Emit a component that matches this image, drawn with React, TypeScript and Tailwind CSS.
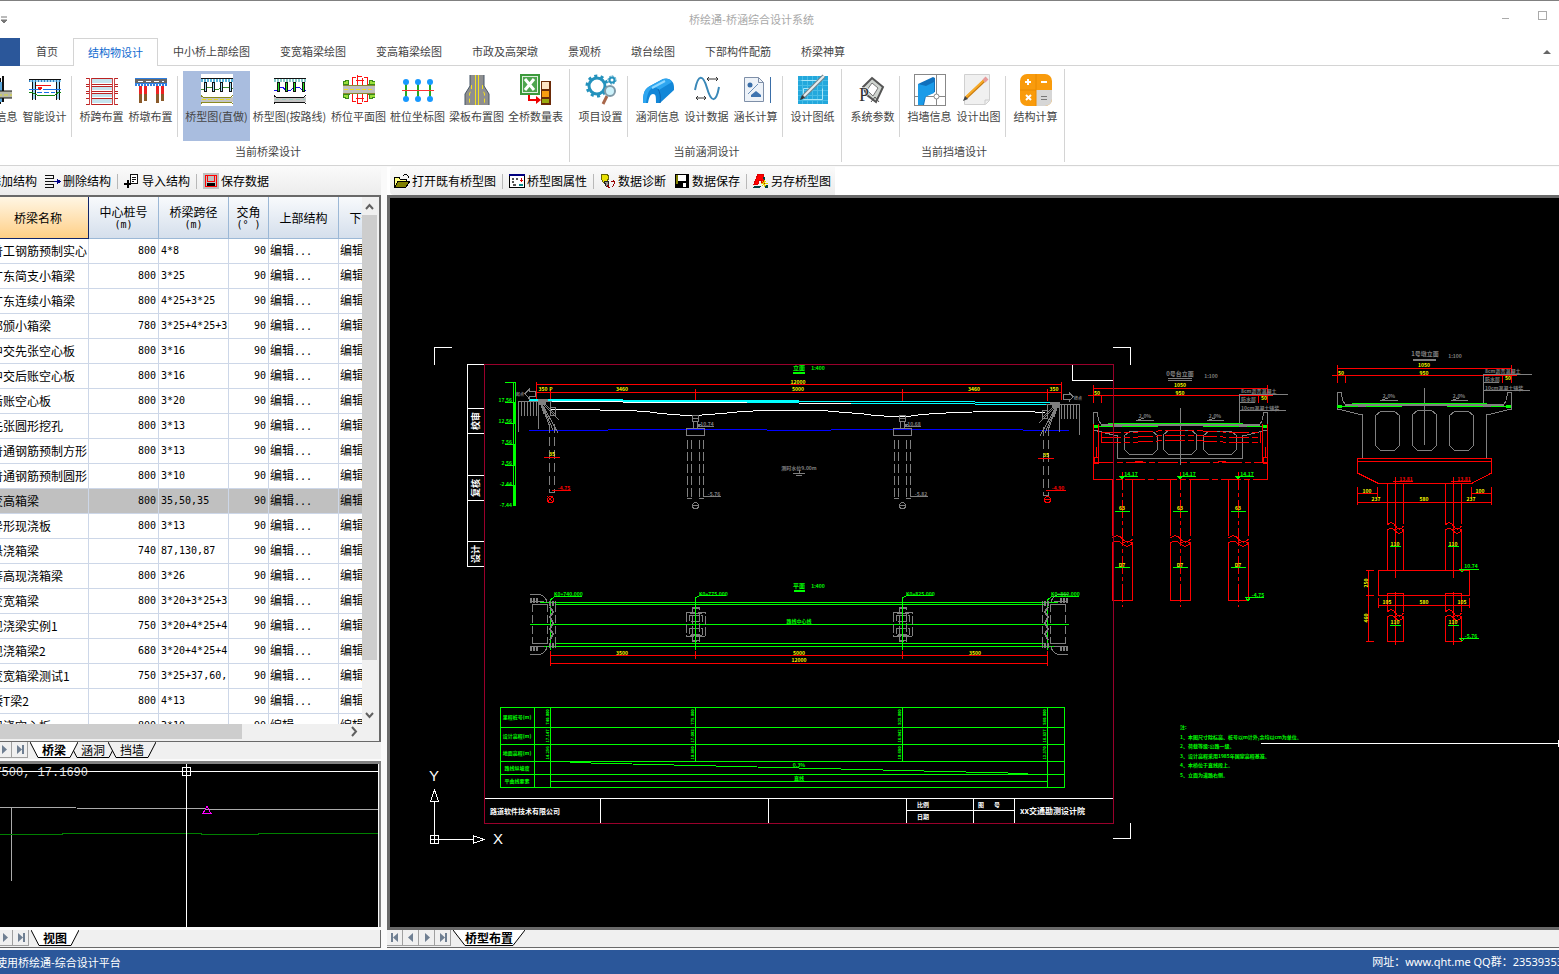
import type { ReactNode } from "react";
import clsx from "clsx";

const G = "#808080";
const R = "#ff0000";
const N = "#00ff00";
const Y = "#ffff00";
const W = "#ffffff";

/* ---------- ribbon icons (32 x 32) ---------- */

const icons: Record<string, ReactNode> = {
  info: (
    <>
      <path d="M8 28V14l6-10v26M20 4v26M23 2v26M14 6l9 8" stroke="#111" strokeWidth="2" />
      <path d="M21 8v20" stroke="#5aa7dd" strokeWidth="2" />
      <rect x="0" y="17" width="32" height="7" fill="#b8b8a8" />
      <path d="M0 17h32M0 24h32" stroke="#111" />
      <path d="M0 21h32" stroke="#dada30" strokeDasharray="4 2" />
    </>
  ),
  smart: (
    <g shapeRendering="crispEdges">
      <path d="M0 5.500h32" stroke="#111" />
      <path d="M0 7h32" stroke="#9fd8f5" strokeWidth="2" />
      <path d="M0 7h32" stroke="#2f7fc0" strokeWidth="2" strokeDasharray="1 2" />
      <path d="M3.500 8v18M6.500 8v18M27.500 8v18M30.500 8v18" stroke="#111" />
      <path d="M5 8v17M29 8v17" stroke="#9fd8f5" strokeWidth="2" />
      <path d="M7 11.500h15M9 13l2 3 2-3z" stroke="#e11" />
      <path d="M0 15.500h10M14 15.500h18" stroke="#1670e8" />
      <path d="M8 18.500h18" stroke="#1670e8" strokeDasharray="5 2" />
      <path d="M0 18.500h3l5 2.500h18l3-2.500h3" stroke="#118811" />
    </g>
  ),
  span: (
    <g shapeRendering="crispEdges">
      {[5, 12, 19, 25].map((y) => (
        <rect key={y} x="5" y={y} width="22" height="4" fill="#c5e4ee" />
      ))}
      {[4, 10, 12, 17, 19, 24, 30].map((y) => (
        <path key={y} d={`M0 ${y + 0.5}h4M6 ${y + 0.5}h20M28 ${y + 0.5}h4`} stroke="#b22" />
      ))}
      <path d="M3.500 4v27M5.500 4v27M26.500 4v27M28.500 4v27" stroke="#c44" />
    </g>
  ),
  pier: (
    <g shapeRendering="crispEdges">
      <rect x="0" y="4" width="32" height="6" fill="#666" />
      <path d="M3 7h26" stroke="#fff" strokeDasharray="5 3" />
      <path d="M0 4.500h32M0 9.500h32" stroke="#2f7fe0" />
      <path d="M0 11h32" stroke="#2f7fe0" strokeWidth="2" strokeDasharray="2 1" />
      <path d="M5 12v8M10 12v8M22 12v8M27 12v8" stroke="#e22" strokeWidth="3" />
      <path d="M5 20v9M10 20v7M22 20v9M27 20v7" stroke="#8a5a2a" strokeWidth="3" />
    </g>
  ),
  straight: (
    <g shapeRendering="crispEdges">
      <rect width="32" height="32" fill="#fff" />
      <path d="M0 4.500h32" stroke="#111" />
      <path d="M0 6.500h32" stroke="#58b6dc" strokeWidth="3" strokeDasharray="2 1" />
      <path d="M0 15h4l2-2h4l2 2h6l3-2h5l6 2" stroke="#3a8a2a" />
      {[3, 11, 19, 28].map((x) => (
        <rect key={x} x={x + 0.5} y="8.500" width="2" height="9" fill="#a5e2f8" stroke="#111" />
      ))}
      <rect x="0" y="23" width="32" height="5" fill="#c4c4c4" />
      <path d="M0 21.500l2 1.500h28l2-1.500M0 29.500l2-1.500h28l2 1.500" stroke="#8a8a20" />
      <path d="M1 25.500h30" stroke="#e8dc20" strokeDasharray="4 2" />
    </g>
  ),
  route: (
    <g shapeRendering="crispEdges">
      <path d="M0 4.500h32" stroke="#111" />
      <path d="M0 6.500h32" stroke="#8cc" strokeWidth="3" strokeDasharray="2 1" />
      <path d="M0 16h4l2-3h3l2 3h6l3-3h5l3 3h4" stroke="#11e" />
      {[3, 11, 19, 28].map((x) => (
        <rect key={x} x={x + 0.5} y="8.500" width="2" height="9" fill="#1fe01f" stroke="#111" />
      ))}
      <rect x="0" y="23" width="32" height="5" fill="#c4c4c4" />
      <path d="M0 21.500l2 1.500h28l2-1.500M0 29.500l2-1.500h28l2 1.500" stroke="#111" />
      <path d="M1 25.500h30" stroke="#9cb" strokeDasharray="4 3" />
    </g>
  ),
  plan: (
    <g shapeRendering="crispEdges">
      <path d="M9.500 4v23M24.500 4v23M9 3.500h4M21 3.500h4M13 6.500h8M9 27.500h4M21 27.500h4M13 24.500h8M14.500 1v29M19.500 4v24M15 2.500h4M15 29.500h4" stroke="#f11" />
      <path d="M0 7.500l5-1 1 4H0zM32 7.500l-5-1-1 4h6zM0 23.500l5 1 1-4H0zM32 23.500l-5 1-1-4h6z" fill="#9be03a" stroke="#3a8a1a" />
      <rect x="0" y="11" width="32" height="9" fill="#c0c0c0" />
      <path d="M0 11.500h32M0 19.500h32" stroke="#8a8a30" />
      <path d="M1 15.500h30" stroke="#eee020" strokeDasharray="4 2" />
    </g>
  ),
  coord: (
    <>
      <path d="M4 8v17M16 8v17M28 8v17" stroke="#2a2" strokeWidth="2" />
      <path d="M0 16.500h32" stroke="#f33" />
      {[4, 16, 28].map((x) => (
        <g key={x} fill="#1698ff">
          <circle cx={x} cy="8" r="3" />
          <circle cx={x} cy="25" r="3" />
        </g>
      ))}
    </>
  ),
  beam: (
    <>
      <path d="M9 1h14v11l5 8v11H4V20l5-8z" fill="#8f8f8f" />
      <path d="M9 1v11l-5 8v11M23 1v11l5 8v11" stroke="#456" />
      <path d="M14.500 1v30M17.500 1v30" stroke="#f2e020" />
      <path d="M10.500 11v4l-2 5v11M21.500 11v4l2 5v11" stroke="#f2e020" strokeDasharray="4 3" />
    </>
  ),
  excel: (
    <>
      <rect x="1" y="1" width="18" height="19" fill="#dff0df" stroke="#3c9a3c" strokeWidth="2" />
      <rect x="3" y="3" width="14" height="15" fill="#4ea54e" />
      <path d="M5 5l9 11M14 5L5 16" stroke="#fff" strokeWidth="3" />
      <path d="M9 21v5h8" stroke="#e00" strokeWidth="2" />
      <path d="M16 22l5 4-5 4z" fill="#e00" />
      <rect x="21" y="7" width="10" height="24" fill="#6a2a08" />
      <rect x="22" y="8" width="7" height="7" fill="#fce3c5" />
      <rect x="22" y="17" width="7" height="6" fill="#f99c10" />
      <rect x="22" y="25" width="7" height="4" fill="#9aaa10" />
    </>
  ),
  gear: (
    <>
      <circle cx="12" cy="12" r="8" fill="#fff" stroke="#2492bd" strokeWidth="3" />
      <circle cx="12" cy="12" r="10" stroke="#2492bd" strokeWidth="3" strokeDasharray="3 3.300" />
      <circle cx="27" cy="6" r="2.500" stroke="#2492bd" strokeWidth="2" />
      <circle cx="27" cy="6" r="4" stroke="#2492bd" strokeDasharray="2 1" />
      <path d="M22 22l-4 8" stroke="#a8664a" strokeWidth="3" />
      <circle cx="25" cy="17" r="5" fill="#cdf2fb" stroke="#7f9aa8" strokeWidth="2" />
    </>
  ),
  culvert: (
    <>
      <path d="M1 29c0-9 1-14 7-17L21 5c6-2 11 2 11 8v3L18 29h-4c0-6 0-9-3-9s-4 4-5 9z" fill="#1287d8" />
      <path d="M1 29c0-9 1-14 7-17L21 5c4-1 8 0 9 3L17 16c-2-3-5-4-8-1-3 2-4 8-5 14z" fill="#2ea6f0" />
      <path d="M10 14L23 7" stroke="#8fd8ff" strokeWidth="2" />
      <path d="M18 29c1-6 0-11-2-14" stroke="#0b66b4" />
    </>
  ),
  wave: (
    <>
      <path d="M4 16C7 0 12 0 16 14s9 16 12-1" stroke="#3a88b8" strokeWidth="2" />
      <path d="M16 5h11M18 3l-2 2 2 2M25 3l2 2-2 2M5 24h10M7 22l-2 2 2 2M13 22l2 2-2 2" stroke="#333" />
    </>
  ),
  length: (
    <>
      <path d="M4.500 3.500h14l5 5v19h-19z" fill="#edf2f8" stroke="#7e8fa8" />
      <path d="M18.500 3.500v5h5" stroke="#7e8fa8" />
      <circle cx="10" cy="11" r="2.500" fill="#3a6ea8" />
      <path d="M8 20l10-10" stroke="#6a8fb8" />
      <path d="M11 23v-2l5-4 5 4v2z" fill="#3f74b0" />
      <path d="M30.500 3v26" stroke="#3a6ea8" />
    </>
  ),
  blueprint: (
    <>
      <rect x="1" y="2" width="30" height="28" fill="#23a8dc" />
      <path d="M1 6.500h30M1 11.500h30M1 16.500h30M1 21.500h30M1 26.500h30M5.500 2v28M10.500 2v28M15.500 2v28M20.500 2v28M25.500 2v28" stroke="#48bce6" />
      <path d="M4.500 6.500h16l-7 8h-7v11h19v-11" stroke="#a8e6f8" />
      <path d="M6 23L27 2" stroke="#76848c" strokeWidth="4" />
      <path d="M7 22L27 2" stroke="#e8eef0" strokeWidth="2" />
      <path d="M3 26l2-5 3 3z" fill="#333" />
    </>
  ),
  params: (
    <>
      <path d="M15 4l11 9-7 15-9-7-4-8z" fill="#cfd4cf" stroke="#555" strokeWidth="2" />
      <path d="M15 9l6 5-5 8-6-6z" fill="#fff" stroke="#777" />
      <text x="2" y="27" fontSize="18" fontFamily="Liberation Serif, serif" fill="#333" stroke="#fff" strokeWidth="1" paintOrder="stroke">P</text>
      <path d="M14 28l4-5 4 5" stroke="#555" />
    </>
  ),
  wall: (
    <>
      <rect x="0.500" y="0.500" width="31" height="31" fill="#fff" stroke="#888" />
      <path d="M22.500 1v30M1 22.500h30" stroke="#888" />
      <path d="M4 10l15-7 2 1v14l-9 4-2 9H4z" fill="#1070bc" />
      <path d="M4 10l8 2 8-4v11l-9 4-2 8H4z" fill="#1b9be8" />
      <circle cx="22.500" cy="22.500" r="2.500" fill="#fff" stroke="#888" />
    </>
  ),
  draft: (
    <>
      <path d="M1.500 0.500h25v26l-4 4h-21z" fill="#f0f0f0" stroke="#d0d0d0" />
      <path d="M26 26h-4v4" stroke="#ccc" />
      <path d="M3 24L21 7" stroke="#c87a10" strokeWidth="3" />
      <path d="M3 23L21 6" stroke="#f7ab28" strokeWidth="2" />
      <path d="M21 7l3-3" stroke="#e79a9a" strokeWidth="4" />
      <path d="M0 27l2-5 3 3z" fill="#444" />
    </>
  ),
  calc: (
    <>
      <rect width="32" height="32" rx="7" fill="#f99b0c" />
      <path d="M16 16h16v9a7 7 0 0 1-7 7h-9z" fill="#d6d6d6" />
      <path d="M16 0v32M0 16h16" stroke="#e88a00" />
      <path d="M5 8h6M8 5v6M21 8h6M6 21l5 5M11 21l-5 5" stroke="#fff" strokeWidth="2" />
      <path d="M21 22.500h6M21 25.500h6" stroke="#777" />
    </>
  ),
};

type RibbonItem = { label: string; icon: string; size?: string; active?: boolean } | "sep";

const ribbonGroups: { title: string; className: string; items: RibbonItem[] }[] = [
  {
    title: "当前桥梁设计",
    className: "-ml-[35px]",
    items: [
      { label: "桥梁信息", icon: "info" },
      { label: "智能设计", icon: "smart" },
      "sep",
      { label: "桥跨布置", icon: "span" },
      { label: "桥墩布置", icon: "pier" },
      "sep",
      { label: "桥型图(直做)", icon: "straight", size: "w-[67px]", active: true },
      { label: "桥型图(按路线)", icon: "route", size: "w-[79px]" },
      { label: "桥位平面图", icon: "plan", size: "w-[59px]" },
      { label: "桩位坐标图", icon: "coord", size: "w-[59px]" },
      { label: "梁板布置图", icon: "beam", size: "w-[59px]" },
      { label: "全桥数量表", icon: "excel", size: "w-[59px]" },
    ],
  },
  {
    title: "当前涵洞设计",
    className: "",
    items: [
      { label: "项目设置", icon: "gear" },
      "sep",
      { label: "涵洞信息", icon: "culvert" },
      { label: "设计数据", icon: "wave" },
      { label: "涵长计算", icon: "length" },
      "sep",
      { label: "设计图纸", icon: "blueprint" },
    ],
  },
  {
    title: "当前挡墙设计",
    className: "",
    items: [
      { label: "系统参数", icon: "params" },
      "sep",
      { label: "挡墙信息", icon: "wall" },
      { label: "设计出图", icon: "draft" },
      "sep",
      { label: "结构计算", icon: "calc" },
    ],
  },
];

const menuTabs = ["首页", "结构物设计", "中小桥上部绘图", "变宽箱梁绘图", "变高箱梁绘图", "市政及高架墩", "景观桥", "墩台绘图", "下部构件配筋", "桥梁神算"];

function TitleBar() {
  return (
    <header className="flex h-[38px] shrink-0 items-center justify-between border-t border-[#808080] bg-white">
      <button aria-label="自定义快速访问工具栏" className="w-8">
        <svg width="8" height="8" className="block"><path d="M1 1h6M1 4h6L4 7z" fill="#777" stroke="#777" /></svg>
      </button>
      <h1 className="text-[11px] text-[#a8a8a8]">桥绘通-桥涵综合设计系统</h1>
      <div className="-mr-[25px] mb-2 flex items-start gap-7 pl-[30px]">
        <button aria-label="最小化"><svg width="9" height="9"><path d="M1 7.500h7" stroke="#aaa" /></svg></button>
        <button aria-label="最大化"><svg width="9" height="9"><rect x="0.500" y="0.500" width="8" height="8" fill="none" stroke="#aaa" /></svg></button>
        <button aria-label="关闭"><svg width="9" height="9"><path d="M0 0l8 8M8 0L0 8" stroke="#aaa" /></svg></button>
      </div>
    </header>
  );
}

function MenuTabs() {
  return (
    <nav className="flex h-7 shrink-0 items-stretch border-b border-[#d4d4d4] text-[11px] text-[#444]">
      <button aria-label="文件" className="-mb-px w-5 bg-[#2b579a]" />
      <div className="flex pl-px">
        {menuTabs.map((t) => (
          <button
            key={t}
            className={clsx(
              "whitespace-nowrap",
              t === "结构物设计" ? "-mb-px border border-b-0 border-[#d4d4d4] bg-white px-3.5 text-[#0f6ad0]" : "px-[15px]"
            )}
          >
            {t}
          </button>
        ))}
      </div>
      <button aria-label="折叠功能区" className="ml-auto w-6">
        <svg width="8" height="6" className="mx-auto block"><path d="M0 5l4-4 4 4z" fill="#666" /></svg>
      </button>
    </nav>
  );
}

function Ribbon() {
  return (
    <section className="flex h-[100px] shrink-0 border-b border-[#d4d4d4] pt-[3px] text-[11px] text-[#444]">
      {ribbonGroups.map((g) => (
        <div key={g.title} className={clsx("mb-[3px] flex shrink-0 flex-col items-center border-r border-[#d4d4d4] pr-1 pl-1.5", g.className)}>
          <div className="flex pt-0.5">
            {g.items.map((it, i) =>
              it === "sep" ? (
                <div key={i} className="mt-[5px] mr-[5px] ml-0.5 h-[61px] w-px bg-[#d4d4d4]" />
              ) : (
                <button
                  key={i}
                  className={clsx("flex h-[70px] flex-col items-center pt-[3px] whitespace-nowrap", it.size ?? "w-[49px]", it.active && "bg-[#a9bddf]")}
                >
                  <svg width="32" height="32" viewBox="0 0 32 32" fill="none">{icons[it.icon]}</svg>
                  <span className="mt-0.5 leading-4">{it.label}</span>
                </button>
              )
            )}
          </div>
          <div className="mt-px leading-[18px]">{g.title}</div>
        </div>
      ))}
    </section>
  );
}

/* ---------- small toolbars ---------- */

function Tool({ label, children }: { label: string; children: ReactNode }) {
  return (
    <button className="flex shrink-0 items-center gap-0.5 px-1 whitespace-nowrap">
      <svg width="16" height="16" viewBox="0 0 16 16" fill="none" shapeRendering="crispEdges">{children}</svg>
      {label}
    </button>
  );
}

const ToolSep = () => <div className="mx-0.5 h-[15px] w-px bg-[#b8b8b8]" />;

function LeftToolbar() {
  return (
    <div className="flex h-7 shrink-0 items-center overflow-hidden bg-linear-to-b from-[#fafafa] to-[#ececec] text-xs text-black">
      <div className="-ml-[33px] flex items-center">
        <Tool label="添加结构"><path d="M0 2h8M0 8h8M0 14h8" stroke="#111" /></Tool>
        <Tool label="删除结构">
          <path d="M0 2.500h8v3H0M0 8.500h11M0 11.500h8v3H0" stroke="#111" />
          <path d="M9 8.500h6M12 6v5l3-2.500z" stroke="#008" fill="#008" />
        </Tool>
        <ToolSep />
        <Tool label="导入结构">
          <path d="M6.500 1.500h7v9h-7zM8 4h4M8 6h4M8 8h2" stroke="#111" fill="#fff" />
          <path d="M0 11h7M3.500 7v8" stroke="#000" strokeWidth="2" />
        </Tool>
        <ToolSep />
        <Tool label="保存数据">
          <rect width="16" height="16" fill="#c0c0c0" />
          <path d="M2.500 2.500h11v11h-11z" stroke="#f00" />
          <rect x="4.500" y="2.500" width="7" height="6" fill="#c0c0c0" stroke="#f00" />
          <rect x="4" y="10" width="8" height="3" fill="#000" />
        </Tool>
      </div>
    </div>
  );
}

function RightToolbar() {
  return (
    <div className="flex h-7 shrink-0 overflow-hidden bg-white pl-[3px] text-xs text-black">
      <div className="flex items-center rounded-l bg-linear-to-b from-[#fafafa] to-[#ececec]">
        <Tool label="打开既有桥型图">
          <path d="M0 4h5l1 2h6v2H5l-3 6H0z" fill="#ffff80" stroke="#000" />
          <path d="M4 8h12l-4 6H1z" fill="#808000" stroke="#000" />
          <path d="M9 3q3-3 5 0v2" stroke="#000" />
        </Tool>
        <ToolSep />
        <Tool label="桥型图属性">
          <rect x="0.500" y="1.500" width="15" height="13" fill="#fff" stroke="#000" />
          <rect y="1" width="16" height="2" fill="#000080" />
          <path d="M3 6h2M3 9h2M4 12h3M7 6h2" stroke="#555" strokeWidth="2" />
          <path d="M11 7h3M12 5v4" stroke="#d00" />
          <path d="M10 12h4" stroke="#088" strokeWidth="2" />
        </Tool>
        <ToolSep />
        <Tool label="数据诊断">
          <path d="M2 1h5l2 3-2 5H3L1 5z" fill="#e8e000" stroke="#660" />
          <path d="M4 8h4v5H6z" fill="#999" stroke="#222" />
          <path d="M13 7q3 4-1 7M11 8h4M9 11l-2 2 3 2" stroke="#900" />
        </Tool>
        <Tool label="数据保存">
          <rect x="1" y="1" width="14" height="14" fill="#000" />
          <rect x="2" y="2" width="2" height="9" fill="#808000" />
          <rect x="4" y="2" width="8" height="6" fill="#fff" />
          <rect x="9" y="10" width="3" height="4" fill="#fff" />
        </Tool>
        <ToolSep />
        <Tool label="另存桥型图">
          <path d="M5 1h5l1 9H8V7H6l-1 4H1z" fill="#f00" stroke="#d00" />
          <path d="M1 13h7l-1 2H0zM10 4h2v4h-1zM12 12h3v3h-3z" fill="#044" />
          <path d="M11 7v7M8 10.500h7M9 8l4 5M13 8l-4 5" stroke="#dd0" />
          <circle cx="11.500" cy="10.500" r="1" fill="#d00" />
        </Tool>
      </div>
    </div>
  );
}

/* ---------- bridge table ---------- */

const rows: [string, number, string][] = [
  ["普工钢筋预制实心", 800, "4*8"],
  ["广东简支小箱梁", 800, "3*25"],
  ["广东连续小箱梁", 800, "4*25+3*25"],
  ["部颁小箱梁", 780, "3*25+4*25+3"],
  ["中交先张空心板", 800, "3*16"],
  ["中交后账空心板", 800, "3*16"],
  ["后账空心板", 800, "3*20"],
  ["先张圆形挖孔", 800, "3*13"],
  ["普通钢筋预制方形", 800, "3*13"],
  ["普通钢筋预制圆形", 800, "3*10"],
  ["变高箱梁", 800, "35,50,35"],
  ["异形现浇板", 800, "3*13"],
  ["悬浇箱梁", 740, "87,130,87"],
  ["等高现浇箱梁", 800, "3*26"],
  ["变宽箱梁", 800, "3*20+3*25+3"],
  ["现浇梁实例1", 750, "3*20+4*25+4"],
  ["现浇箱梁2", 680, "3*20+4*25+4"],
  ["变宽箱梁测试1", 750, "3*25+37,60,"],
  ["矮T梁2", 800, "4*13"],
  ["现浇空心板", 800, "3*10"],
];

const mono = "font-['DejaVu_Sans_Mono',monospace] text-[10px]";
const th = "h-[42px] border-r border-b border-[#9cb8d6] bg-linear-to-b from-[#f8fafc] to-[#d5dfec] p-0 font-normal";
const td = "h-[25px] overflow-hidden border-r border-b border-[#cdd7e8] p-0 leading-4 whitespace-nowrap";

const Unit = ({ children }: { children: ReactNode }) => <span className={clsx(mono, "block leading-3")}>{children}</span>;

function BridgeTable() {
  return (
    <div className="flex min-h-0 flex-1 flex-col border-t-2 border-r-2 border-b border-[#696969] bg-[#f0f0f0]">
      <div className="flex min-h-0 flex-1">
        <div className="min-w-0 flex-1 overflow-hidden bg-white">
          <table className="-ml-3 w-[421px] table-fixed border-separate border-spacing-0 text-xs leading-[14px] text-black">
            <colgroup>
              <col className="w-[101px]" />
              <col className="w-[70px]" />
              <col className="w-[70px]" />
              <col className="w-10" />
              <col className="w-[70px]" />
              <col className="w-[70px]" />
            </colgroup>
            <thead>
              <tr>
                <th className="h-[42px] border-r border-b border-[#10246a] bg-linear-to-b from-[#fff6e4] to-[#ffcf85] p-0 font-normal">桥梁名称</th>
                <th className={th}>中心桩号<Unit>(m)</Unit></th>
                <th className={th}>桥梁跨径<Unit>(m)</Unit></th>
                <th className={th}>交角<Unit>(° )</Unit></th>
                <th className={th}>上部结构</th>
                <th className={th}>下部结构</th>
              </tr>
            </thead>
            <tbody>
              {rows.map(([name, no, span]) => (
                <tr key={name} className={name === "变高箱梁" ? "bg-[#c0c0c0]" : "bg-white"}>
                  <td className={clsx(td, "pl-[3px]")}>{name}</td>
                  <td className={clsx(td, mono, "pr-0.5 text-right")}>{no}</td>
                  <td className={clsx(td, mono, "pl-0.5")}>{span}</td>
                  <td className={clsx(td, mono, "pr-0.5 text-right")}>90</td>
                  <td className={clsx(td, "pl-px")}><button>编辑<span className={mono}>...</span></button></td>
                  <td className={clsx(td, "pl-px")}><button>编辑<span className={mono}>...</span></button></td>
                </tr>
              ))}
            </tbody>
          </table>
        </div>
        <div className="mr-0.5 flex w-[15px] flex-col items-center">
          <svg width="15" height="18" fill="none"><path d="M4 12l3.500-4L11 12" stroke="#606060" strokeWidth="2" /></svg>
          <div className="w-full flex-[444] bg-[#cdcdcd]" />
          <div className="flex-[46]" />
          <svg width="15" height="18" fill="none"><path d="M4 7l3.500 4L11 7" stroke="#606060" strokeWidth="2" /></svg>
        </div>
      </div>
      <div className="mb-0.5 flex h-[15px] shrink-0 items-center">
        <div className="h-full flex-[241] bg-[#cdcdcd]" />
        <div className="flex-[102]" />
        <svg width="19" height="15" fill="none" className="mr-[15px]"><path d="M7 3l4 4.500L7 12" stroke="#606060" strokeWidth="2" /></svg>
      </div>
    </div>
  );
}

const navPaths = ["M4 3h2v9H4zM11 3v9L6 7.500z", "M10 3v9L5 7.500z", "M6 3v9l5-4.500z", "M5 3v9l5-4.500zM10 3h2v9h-2z"];
const navNames = ["第一页", "上一页", "下一页", "最后一页"];

function SheetTabs({ tabs, className }: { tabs: string[]; className?: string }) {
  return (
    <div className="h-[17px] shrink-0 overflow-hidden bg-[#f0f0f0]">
      <div className={clsx("flex h-full", className)}>
        {navPaths.map((d, i) => (
          <button key={d} aria-label={navNames[i]} className="h-4 w-4 shrink-0 border-r border-b border-[#a0a0a0]">
            <svg width="15" height="15" className="block"><path d={d} fill="#6f7f92" /></svg>
          </button>
        ))}
        <div className="ml-0.5 flex h-4">
          {tabs.map((t, i) => (
            <button key={t} className={clsx("relative flex items-center px-3 text-xs leading-4 whitespace-nowrap text-black", i === 0 ? "z-10 font-bold" : "-ml-[9px]")}>
              <svg className="absolute inset-0 h-full w-full" viewBox="0 0 48 16" preserveAspectRatio="none">
                <path d="M0 0l8 15.500h32L48 0" fill={i === 0 ? W : "#f0f0f0"} stroke="#000" vectorEffect="non-scaling-stroke" />
              </svg>
              <span className="relative">{t}</span>
            </button>
          ))}
        </div>
      </div>
    </div>
  );
}

/* ---------- drawings ---------- */

type TextProps = { x: number; y: number; c?: string; s?: number; a?: "start" | "middle" | "end"; r?: boolean; children: ReactNode };

function T({ x, y, c = Y, s = 5, a = "middle", r, children }: TextProps) {
  return (
    <text x={x} y={y} fill={c} stroke="none" fontSize={s} textAnchor={a} fontWeight="bold" transform={r ? `rotate(-90 ${x} ${y})` : undefined}>
      {children}
    </text>
  );
}

function SectionView() {
  return (
    <svg className="block h-[163px] w-full bg-black" fill="none" shapeRendering="crispEdges">
      <text x="88" y="12" textAnchor="end" fontSize="12" fill="#ddd" fontFamily="Liberation Mono, monospace">792.7500, 17.1690</text>
      <path d="M0 43.500h12L140 44.500 270 45.500 600 46.500M11.500 43v74" stroke="#aaa" />
      <path d="M0 70.500h62l1-1h138l1 1h56l1-1h341" stroke="#008000" />
      <path d="M0 7.500h600M186.500 0v163" stroke="#fff" />
      <rect x="182.500" y="3.500" width="8" height="8" stroke="#fff" />
      <path d="M207 42l4 7.500h-8z" stroke="#f0f" />
    </svg>
  );
}

// abutment hatching on the elevation, drawn for the left side
const Abutment = () => (
  <g stroke={G}>
    <path d="M518 401.500h34M518.500 401v31M521.500 401v15M524.500 401v15M527.500 401v15M530.500 401v15M533.500 401v15M536.500 401v15M538.500 401v28" />
    <path d="M538 400h10M539 403h7" strokeWidth="3" />
    <path d="M540 402l4 12M541 402l8 23M541 402l12 28M541 402l17 31M541 402l18 18M543 402l12 12M550.500 401v14h5v-8h-5" />
    <path d="M549.500 424v68M554.500 424v68" strokeDasharray="9 4" />
    <path d="M549 492.500h6" />
    <path d="M525 393.500l4-4v2h6v5h-6v2z" />
  </g>
);

const ElevationPier = () => (
  <g stroke={G}>
    <path d="M692.500 415.500h6v6h-6zM692 418.500h6M693.500 422v6M697.500 422v6M686.500 428.500h18v7h-18z" />
    <path d="M687.500 440v58M691.500 440v58M699.500 440v58M703.500 440v58" strokeDasharray="9 3" />
    <path d="M687 498.500h5M699 498.500h5M697 426.500h17M703 496.500h18M699 426l2-2h-4z" />
    <circle cx="695.500" cy="505.500" r="3" />
    <path d="M693 505.500h5" />
  </g>
);

const PlanPier = () => (
  <g>
    <path d="M686.500 612.500h19v24h-19zM692.500 607.500h7v34h-7zM689.500 615.500h13v6h-13zM689.500 628.500h13v6h-13z" stroke={G} strokeDasharray="9 2" />
    <path d="M692 608.500h8M692 640.500h8M690 613.500h12M690 635.500h12" stroke={G} />
    <path d="M695.500 650v-52l4-2.500h26" stroke={N} />
  </g>
);

const PlanAbutment = () => (
  <g stroke={G}>
    <path d="M532.500 604v40M547.500 604v40M555.500 604v40" strokeDasharray="8 3" />
    <path d="M532 604.500h16M532 643.500h16M530 594.500h10q6 2 7 8M530 654.500h10q6-2 7-8" />
    <path d="M530 600h9M530 648h9M549 603h7M549 645h7" strokeWidth="5" strokeDasharray="2 1" />
    <path d="M530 601.500h14M530 646.500h14" />
    <path d="M550 607l3 5-3 5 3 6-3 6 3 5-3 6" strokeWidth="2" />
  </g>
);

// deck, kerbs, slopes and notes shared by both cross sections (centre at x=1180)
const Deck = () => (
  <g>
    <path d="M1093.500 388.500h174M1088 395.500h185M1093.500 385v18M1101.500 395v8M1267.500 385v18M1258.500 395v8" stroke={R} />
    <T x={1180} y={387}>1050</T>
    <T x={1180} y={395}>950</T>
    <T x={1097} y={395}>50</T>
    <T x={1264} y={400}>50</T>
    <g stroke={G}>
      <path d="M1093.500 430v-17.500h4l1 8 3 4M1267.500 430v-17.500h-4l-1 8-3 4M1180.500 408v57" />
      <path d="M1101 426l59-1.500h41l59 1.500" strokeWidth="3" />
      <path d="M1239.500 425v-30.500h48M1239 402.500h16M1239 410.500h47" />
      <path d="M1136 420.500h18M1138 420l6-2M1207 420.500h17M1209 420l6-2" />
    </g>
    <path d="M1094 426.500h20M1108 423.500h12l50 .5M1158 423.500h45M1122 426.500h36M1203 426.500h36M1203 423.500h40M1247 426.500h20" stroke={N} strokeWidth="1" />
    <path d="M1093 426.500h5M1262 426.500h5" stroke={N} strokeWidth="3" />
    <T x={1145} y={418} c={G}>2.0%</T>
    <T x={1215} y={418} c={G}>2.0%</T>
    <T x={1241} y={393} c={G} a="start">8cm沥青混凝土</T>
    <T x={1241} y={401} c={G} a="start">防水层</T>
    <T x={1241} y={410} c={G} a="start">10cm混凝土铺装</T>
  </g>
);

const cell = (x: number, y: number, w: number, h: number) =>
  `M${x + 5} ${y}h${w - 10}l5 4v${h - 9}l-5 5h${10 - w}l-5-5v${9 - h}z`;

const brk = (x: number, y: number, w: number) =>
  `M${x} ${y}q${w / 4}-5 ${w / 2} 1t${w / 2} 0M${x} ${y + 5}q${w / 4}-4 ${w / 2} 1q${w / 4} 5 ${w / 2}-1q-${w / 4}-3-${w / 2} 0`;

function AbutmentSection() {
  return (
    <g>
      <T x={1180} y={376} s={6} c={G}>0号台立面</T>
      <path d="M1168 378.500h24M1168 380.500h24" stroke={G} />
      <T x={1211} y={378} c={G}>1:100</T>
      <Deck />
      <path d="M1093.500 430l24 6v22.500h125V436l25-6" stroke={G} />
      <path d={cell(1124.5, 431.5, 33, 23) + cell(1163.5, 430.5, 33, 24) + cell(1203.5, 431.5, 33, 23)} stroke={G} />
      <g stroke={R}>
        <path d="M1093.500 424v55.500M1267.500 424v55.500M1098.500 424v39M1262.500 424v39M1094 457h4v6h-4zM1263 457h4v6h-4zM1096.500 447v10M1265.500 447v10" />
        <path d="M1093 479.500h174M1094 462.500h174M1101 432.500h27l40-2h25l40 2h28M1101 437.500h27l40-2h25l40 2h28M1101 442.500h27l40-2h25l40 2h28" strokeDasharray="20 3 6 3" />
        <path d="M1101.500 432v11M1260.500 432v11M1135 461.500h8M1218 461.500h8" />
      </g>
      {[1122, 1180, 1238].map((x) => (
        <g key={x}>
          <path d={`M${x - 9.5} 480v56M${x + 10.5} 480v56M${x - 9.5} 543v57.500h20V543` + brk(x - 9.5, 538, 20)} stroke={R} />
          <path d={`M${x + 0.5} 472v135`} stroke={R} strokeDasharray="18 3 4 3" />
          <path d={`M${x - 7} 511.500h15M${x - 7} 567.500h15M${x - 3} 476.500h19M${x - 2} 476l2 3 2-3`} stroke={N} />
          <T x={x} y={510}>63</T>
          <T x={x} y={567}>D7</T>
          <T x={x + 9} y={476} c={N}>14.17</T>
        </g>
      ))}
      <path d="M1245 597.500h19M1246 598l2 3 2-3" stroke={N} />
      <T x={1258} y={597} c={N}>-4.75</T>
    </g>
  );
}

function PierSection() {
  return (
    <g>
      <T x={1425} y={356} s={6} c={G}>1号墩立面</T>
      <path d="M1413 360h23" stroke={G} strokeWidth="2" />
      <T x={1455} y={358} c={G}>1:100</T>
      <g transform="translate(244 -20)"><Deck /></g>
      <path d="M1337.500 409l25 6v43.500h124V415l25-6" stroke={G} />
      <path d={cell(1375.5, 411.5, 24, 39) + cell(1412.5, 410.5, 24, 40) + cell(1449.5, 411.5, 24, 39)} stroke={G} />
      <g stroke={R}>
        <path d="M1357.500 458.500h134V473l-20 10.500h-93L1357.500 473zM1357 461.500h134" />
        <path d="M1357.500 487v18M1377.500 487v10M1471.500 487v10M1491.500 487v18M1357 493.500h20M1471 493.500h20M1357 502.500h134" />
        <path d="M1378.500 570.500h91v25h-91zM1378 605.500h91M1378.500 598v10M1469.500 598v10" />
        <path d="M1368.500 570v71M1366 570.500h8M1366 595.500h8M1366 641.500h8" />
      </g>
      {[1395, 1453].map((x) => (
        <g key={x}>
          <path
            d={`M${x - 7.5} 483v41M${x + 8.5} 483v41M${x - 7.5} 529v41M${x + 8.5} 529v41M${x - 7.5} 612v-18.500h16V612M${x - 7.5} 617v24.500h16V617M${x + 0.5} 477v101M${x + 0.5} 592v53` +
              brk(x - 7.5, 525, 16) +
              brk(x - 7.5, 612, 16)}
            stroke={R}
          />
          <path d={`M${x - 5} 546.500h11M${x - 5} 625.500h11`} stroke={N} />
          <T x={x} y={546}>110</T>
          <T x={x} y={624}>110</T>
          <path d={`M${x - 2} 481.500h20`} stroke={R} />
          <T x={x + 11} y={481} c={R}>13.81</T>
        </g>
      ))}
      <T x={1367} y={493}>100</T>
      <T x={1480} y={493}>100</T>
      <T x={1376} y={501}>237</T>
      <T x={1424} y={501}>580</T>
      <T x={1471} y={501}>237</T>
      <T x={1387} y={604}>105</T>
      <T x={1424} y={604}>580</T>
      <T x={1462} y={604}>105</T>
      <T x={1368} y={583} r>250</T>
      <T x={1368} y={618} r>460</T>
      <path d="M1459 569.500h20M1459 638.500h20M1460 570l2 2 2-2M1460 639l2 2 2-2" stroke={N} />
      <T x={1471} y={568} c={N}>10.74</T>
      <T x={1471} y={638} c={N}>-5.76</T>
    </g>
  );
}

function Elevation() {
  return (
    <g>
      <T x={799} y={370} s={6} c={N}>立面</T>
      <path d="M793 373h12" stroke={N} strokeWidth="2" />
      <T x={818} y={370} c={N}>1:400</T>
      <g stroke={N}>
        <path d="M513.500 382v124M515.500 382v124M505 382.500h10M505 402.500h10M505 423.500h10M505 444.500h10M505 465.500h10M505 485.500h10" />
        <path d="M514.500 402v21M514.500 444v21M514.500 485v21" strokeWidth="3" />
      </g>
      {["17.56", "12.56", "7.56", "2.56", "-2.44", "-7.44"].map((v, i) => (
        <T key={v} x={512} y={402 + i * 21} c={N} a="end">{v}</T>
      ))}
      <path d="M536 384.500h526M536 392.500h526M536.500 382v18M550.500 389v12M695.500 389v12M902.500 389v12M1047.500 389v12M1061.500 382v18" stroke={R} />
      <T x={543} y={391}>350</T>
      <T x={551} y={391}>P</T>
      <T x={622} y={391}>3460</T>
      <T x={798} y={384}>12000</T>
      <T x={798} y={391}>5000</T>
      <T x={974} y={391}>3460</T>
      <T x={1054} y={391}>350</T>
      <path d="M529 399.500h94M529 400.500h270M623 401.500h352M747 402.500h52M851 403.500h124M975 402.500h83M975 404.500h90" stroke="#00ffff" />
      <path d="M551 401.500h72M623 402.500h124M799 403.500h52" stroke={W} />
      <path d="M551 409.500h21l55 1 19 1 14 2 14 1 11 1h11l13-1 13-1 20-2 23-1h57l22 2 16 1 14 2 20 1h14l13-2 17-1 17-1 36-1h33l21 1" stroke={W} />
      <path d="M529 430.500h79M608 429.500h159M767 430.500h64M831 429.500h192M1023 430.500h46" stroke="#0000ff" />
      <Abutment />
      <g transform="matrix(-1 0 0 1 1598 3)"><Abutment /></g>
      <ElevationPier />
      <g transform="translate(207 0)"><ElevationPier /></g>
      <T x={707} y={426} c={G}>10.74</T>
      <T x={914} y={426} c={G}>10.68</T>
      <T x={714} y={496} c={G}>-5.76</T>
      <T x={921} y={496} c={G}>-5.82</T>
      <T x={520} y={396} c={G} s={4}>起点</T>
      <T x={1078} y={400} c={G} s={4}>终点</T>
      <T x={799} y={470} c={G}>测时水位9.00m</T>
      <path d="M793 473.500h12M796 475.500h6M799 470v4" stroke={G} />
      <g stroke={R}>
        <path d="M544 457.500h16M1038 458.500h16M552 490.500h19M1046 490.500h20M547 496l6 6M553 496l-6 6" />
        <circle cx="550.500" cy="499.500" r="3" />
        <circle cx="1047.500" cy="499.500" r="3" />
        <path d="M1045 499.500h5" />
      </g>
      <T x={552} y={456}>35</T>
      <T x={1046} y={457}>35</T>
      <T x={564} y={490} c={R}>-4.75</T>
      <T x={1058} y={490} c={R}>-4.90</T>
    </g>
  );
}

const stations = [
  { x: 550, k: "K0+740.000", v: ["740.000", "17.147", "14.256"] },
  { x: 695, k: "K0+775.000", v: ["775.000", "17.092", "10.860"] },
  { x: 902, k: "K0+825.000", v: ["825.000", "16.942", "10.680"] },
  { x: 1047, k: "K0+860.000", v: ["860.000", "16.837", "13.370"] },
];

function PlanView() {
  return (
    <g>
      <T x={799} y={588} s={6} c={N}>平面</T>
      <path d="M794 591h11" stroke={N} strokeWidth="2" />
      <T x={818} y={588} c={N}>1:400</T>
      <path d="M540 602.500h518M555 604.500h490M530 624.500h539M555 643.500h490M540 646.500h518M550.500 600v50M1047.500 600v50M550.500 600l4-3.500h27M1047.500 600l4-3.500h27" stroke={N} />
      <PlanAbutment />
      <g transform="matrix(-1 0 0 1 1598 0)"><PlanAbutment /></g>
      <PlanPier />
      <g transform="translate(207 0)"><PlanPier /></g>
      <path d="M550 655.500h498M550 663.500h498M550.500 651v15M695.500 651v8M902.500 651v8M1047.500 651v15" stroke={R} />
      {stations.map((s) => (
        <T key={s.k} x={s.x + 4} y={596} s={5} c={N} a="start">{s.k}</T>
      ))}
      <T x={799} y={623} c={N}>路线中心线</T>
      <T x={622} y={655}>3500</T>
      <T x={799} y={655}>5000</T>
      <T x={975} y={655}>3500</T>
      <T x={799} y={662}>12000</T>
      {/* profile data */}
      <g stroke={N}>
        <path d="M500.500 707.500h564v80h-564zM500 727.500h564M500 744.500h564M500 761.500h564M500 774.500h564M550 781.500h497" />
        <path d="M534.500 707v80M550.500 707v80M695.500 707v54M902.500 707v54M1047.500 707v80M570 762.500l458 11" />
      </g>
      {["里程桩号(m)", "设计高程(m)", "地面高程(m)", "路线纵坡度", "平曲线要素"].map((t, i) => (
        <T key={t} x={517} y={[719, 738, 755, 770, 783][i]} c={N}>{t}</T>
      ))}
      {stations.map((s) => s.v.map((v, i) => (
        <T key={s.k + i} x={s.x - 1} y={[717, 736, 753][i]} s={4} c={N} r>{v}</T>
      )))}
      <T x={799} y={767} c={N}>0.3%</T>
      <T x={799} y={780} c={N}>直线</T>
    </g>
  );
}

const notes = [
  "注:",
  "1、本图尺寸除标高、桩号以m计外,余均以cm为单位。",
  "2、荷载等级:公路一级。",
  "3、设计高程采用1985年国家高程基准。",
  "4、本桥位于直线段上。",
  "5、立面为道路右侧。",
];

function Drawing() {
  return (
    <svg className="block min-h-0 w-full flex-1 bg-black" fill="none" shapeRendering="crispEdges">
      <g transform="translate(-390 -198)">
        <path d="M434.500 365v-17.500H452M1113 347.500h17.500V365M1130.500 823v15.500H1113" stroke={W} />
        <path d="M484 364.500h-16.500v202H484M467 408.500h17M467 433.500h17M467 475.500h17M467 500.500h17M467 541.500h17M1072.500 365v15.500h41M485 798.500h628M600.500 798v25M768.500 798v25M906.500 798v25M973.500 798v25M1014.500 798v25M906 810.500h108" stroke={W} />
        <T x={479} y={421} s={9} c={W} r>校审</T>
        <T x={479} y={488} s={9} c={W} r>复核</T>
        <T x={479} y={554} s={9} c={W} r>设计</T>
        <T x={490} y={814} s={7} c={W} a="start">路道软件技术有限公司</T>
        <T x={923} y={807} s={6} c={W}>比例</T>
        <T x={923} y={819} s={6} c={W}>日期</T>
        <T x={981} y={807} s={6} c={W}>图</T>
        <T x={997} y={807} s={6} c={W}>号</T>
        <T x={1020} y={814} s={8} c={W} a="start">xx交通勘测设计院</T>
        <Elevation />
        <PlanView />
        <AbutmentSection />
        <PierSection />
        <rect x="484.500" y="364.500" width="629" height="459" stroke="#99002b" />
        {notes.map((n, i) => (
          <T key={n} x={1180} y={729 + Math.round(i * 9.6)} c={N} a="start">{n}</T>
        ))}
        {/* cursor and axes */}
        <path d="M1261 743.500h600M1558.500 740v7M430.500 835.500h8v8h-8zM434.500 843v-42M430 839.500h43M434.500 790l4 11h-8zM484 839.500l-11-4v8z" stroke={W} />
        <g fontFamily="Liberation Sans, sans-serif" fontSize="15" textAnchor="middle" fill={W}>
          <text x="434" y="781">Y</text>
          <text x="498" y="844">X</text>
        </g>
      </g>
    </svg>
  );
}

export default function App() {
  return (
    <div className="flex h-screen flex-col overflow-hidden bg-white font-['Noto_Sans_CJK_SC',sans-serif]">
      <TitleBar />
      <MenuTabs />
      <Ribbon />
      <main className="flex min-h-0 flex-1 gap-1.5 bg-[#fafafa] pt-px pb-0.5">
        <section className="flex w-[381px] shrink-0 flex-col border-b border-[#696969]">
          <LeftToolbar />
          <BridgeTable />
          <SheetTabs tabs={["桥梁", "涵洞", "挡墙"]} className="-ml-9" />
          <div className="mt-0.5 border-t-[3px] border-r-2 border-[#808080] pr-px"><SectionView /></div>
          <div className="mt-[3px] border-r border-[#696969]"><SheetTabs tabs={["视图"]} className="-ml-[35px]" /></div>
        </section>
        <section className="flex min-w-0 flex-1 flex-col border-b border-[#696969]">
          <RightToolbar />
          <div className="flex min-h-0 flex-1 flex-col border-t-[3px] border-b-[3px] border-l-[3px] border-[#696969]">
            <Drawing />
          </div>
          <SheetTabs tabs={["桥型布置"]} />
        </section>
      </main>
      <footer className="flex h-6 shrink-0 items-center justify-between bg-[#2b579a] text-[11px] whitespace-nowrap text-white">
        <span className="-ml-[26px]">欢迎使用桥绘通-综合设计平台</span>
        <span className="-mr-1 font-['Noto_Sans','Noto_Sans_CJK_SC',sans-serif]">网址：www.qht.me QQ群：23539353</span>
      </footer>
    </div>
  );
}
